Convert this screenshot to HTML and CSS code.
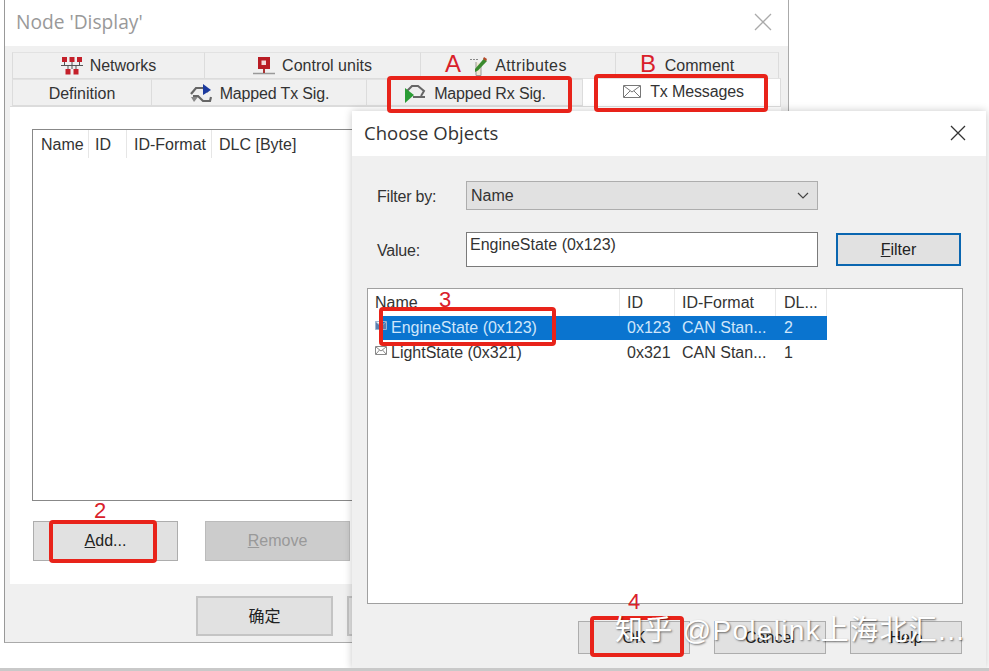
FILE: index.html
```html
<!DOCTYPE html>
<html lang="en">
<head>
<meta charset="utf-8">
<title>Choose Objects</title>
<link rel="stylesheet" href="styles.css">
</head>
<body>
<div class="desktop">
  <section class="win node">
    <header class="node-title">
      <span class="node-title-text">Node 'Display'</span>
      <svg class="close close-dim" viewBox="0 0 18 18"><path d="M1 1L17 17M17 1L1 17"/></svg>
    </header>
    <div class="node-body">
      <div class="tab-row row-one">
        <div class="tab t-net"><svg class="ico" width="22" height="18" viewBox="0 0 22 18"><path d="M0 8.500H22M3.500 3V9M11 3V12M18.500 3V9M7 9V12M15 9V12" fill="none" stroke="#555" stroke-width="1"/><path d="M1 0H6V5H1zM8.500 0H13.500V5H8.500zM16 0H21V5H16zM4.500 12H9.500V17.500H4.500zM12.500 12H17.500V17.500H12.500z" fill="#c4202a"/></svg>Networks</div>
        <div class="tab t-cu"><svg class="ico" width="22" height="19" viewBox="0 0 22 19"><path d="M0 17.500H22" stroke="#999" stroke-width="1.500"/><path d="M11 13V17" stroke="#a33" stroke-width="2"/><path d="M5 1H17V13H5z" fill="#b91c24"/><path d="M8.500 4.500H13V9H8.500z" fill="#f2d9d9"/></svg>Control units</div>
        <div class="tab t-attr"><svg class="ico" width="19" height="20" viewBox="0 0 19 20"><path d="M1 3.500H9" fill="none" stroke="#888" stroke-width="1" stroke-dasharray="2 1"/><path d="M7 6V19.500H12V8" fill="#efe8d2" stroke="#999" stroke-width="1"/><path d="M6 13L15 2.500L18 5L9 14.500L6 16z" fill="#3a8a2e"/><path d="M15 1L18 3L17 5L14 3z" fill="#b5482a"/></svg><span class="wide">Attributes</span></div>
        <div class="tab t-com"><span class="shift">Comment</span></div>
      </div>
      <div class="tab-row row-two">
        <div class="tab t-def">Definition</div>
        <div class="tab t-tx"><svg class="ico" width="22" height="20" viewBox="0 0 22 20"><path d="M1 10L6 4H13L18 8" fill="#eee" stroke="#666" stroke-width="2.200"/><path d="M3 12H8L13 17H20L21 13" fill="#eee" stroke="#666" stroke-width="2.200"/><path d="M13 0L21 6L13 11z" fill="#1c3a9e"/><path d="M1 13L8 13L4 18z" fill="#888"/></svg><span class="tight">Mapped Tx Sig.</span></div>
        <div class="tab t-rx"><svg class="ico" width="22" height="20" viewBox="0 0 22 20"><path d="M3 7L8 2H14L20 7L17 12" fill="#eee" stroke="#666" stroke-width="2"/><path d="M9 13H21" stroke="#666" stroke-width="2"/><path d="M1 4L10 11L1 19z" fill="#2a9c35"/></svg><span class="tight">Mapped Rx Sig.</span></div>
        <div class="tab tab-active t-msg"><svg class="ico" width="18" height="13" viewBox="0 0 18 13"><path d="M.500.500H17.500V12.500H.500zM1 1L9 7L17 1M1 12L7 6M17 12L11 6" fill="#fff" stroke="#777" stroke-width="1"/></svg><span class="tight">Tx Messages</span></div>
      </div>
      <div class="panel">
        <div class="msg-list">
          <div class="msg-head">
            <span class="mh mh-name">Name</span>
            <span class="mh mh-id">ID</span>
            <span class="mh mh-fmt">ID-Format</span>
            <span class="mh mh-dlc">DLC [Byte]</span>
          </div>
        </div>
        <div class="panel-actions">
          <button class="btn btn-add"><u>A</u>dd...</button>
          <button class="btn btn-remove"><u>R</u>emove</button>
        </div>
      </div>
      <div class="node-footer">
        <button class="btn btn-ok-cn">确定</button>
        <button class="btn btn-cancel-cn">取消</button>
      </div>
    </div>
  </section>

  <section class="win choose">
    <header class="choose-title">
      <span>Choose Objects</span>
      <svg class="close" viewBox="0 0 18 18"><path d="M2 2L16 16M16 2L2 16"/></svg>
    </header>
    <div class="choose-body">
      <div class="field field-filter">
        <label class="field-label">Filter by:</label>
        <div class="select"><span>Name</span><svg width="12" height="8" viewBox="0 0 12 8"><path d="M1 1L6 6L11 1" fill="none" stroke="#444" stroke-width="1.200"/></svg></div>
      </div>
      <div class="field field-value">
        <label class="field-label label-value">Value:</label>
        <div class="input">EngineState (0x123)</div>
        <button class="btn btn-filter"><u>F</u>ilter</button>
      </div>
      <div class="obj-list">
        <div class="obj-row obj-head">
          <span class="c-name">Name</span><span class="c-id">ID</span><span class="c-fmt">ID-Format</span><span class="c-dl">DL...</span>
        </div>
        <div class="obj-row obj-sel">
          <svg class="env" width="12" height="9" viewBox="0 0 12 9"><path d="M.500.500H11.500V8.500H.500zM1 1L6 5L11 1" fill="#5b7fae" stroke="#9db4d0"/></svg>
          <span class="c-name">EngineState (0x123)</span><span class="c-id">0x123</span><span class="c-fmt">CAN Stan...</span><span class="c-dl">2</span>
        </div>
        <div class="obj-row">
          <svg class="env" width="12" height="9" viewBox="0 0 12 9"><path d="M.500.500H11.500V8.500H.500zM1 1L6 5L11 1M1 8L4.500 4M11 8L7.500 4" fill="#fff" stroke="#888"/></svg>
          <span class="c-name">LightState (0x321)</span><span class="c-id">0x321</span><span class="c-fmt">CAN Stan...</span><span class="c-dl">1</span>
        </div>
      </div>
      <div class="choose-actions">
        <button class="btn btn-dlg">OK</button>
        <button class="btn btn-dlg">Cancel</button>
        <button class="btn btn-dlg">Help</button>
      </div>
    </div>
  </section>

  <div class="mark mark-a"></div>
  <div class="mark mark-b"></div>
  <div class="mark mark-2"></div>
  <div class="mark mark-3"></div>
  <div class="mark mark-4"></div>
  <span class="note note-a">A</span>
  <span class="note note-b">B</span>
  <span class="note note-2">2</span>
  <span class="note note-3">3</span>
  <span class="note note-4">4</span>
  <div class="watermark">知乎 @Polelink上海北汇...</div>
</div>
</body>
</html>
```

FILE: styles.css
```css
* { box-sizing: border-box; }
html, body { margin: 0; padding: 0; }
body { width: 989px; height: 671px; overflow: hidden; background: #fff; font-family: "Liberation Sans", "Noto Sans CJK SC", sans-serif; color: #222; }
.desktop { position: relative; width: 989px; height: 671px; overflow: hidden; border-bottom: 3px solid #c9c9c9; }
.win { position: absolute; display: flex; flex-direction: column; }
button { font-family: inherit; }

.node { left: 4px; top: 0; width: 785px; height: 643px; border-left: 1px solid #999; border-right: 1px solid #aaa; border-bottom: 1px solid #aaa; background: #fff; }
.node-title { height: 46px; display: flex; align-items: center; justify-content: space-between; padding: 0 16px 3px 11px; }
.node-title-text { font-size: 19.200px; color: #999; font-family: "Open Sans", "Liberation Sans", sans-serif; }
.close { width: 18px; height: 18px; fill: none; stroke: #333; stroke-width: 1.300; }
.close-dim { stroke: #aaa; }
.node-body { flex: 1; display: flex; flex-direction: column; background: #f0f0f0; padding: 6px 7px 0 5px; }

.tab-row { display: flex; height: 27px; margin-left: 2px; font-size: 16px; color: #333; }
.row-one { margin-left: 2px; }
.tab { display: flex; align-items: center; justify-content: center; gap: 7px; background: #f0f0f0; border-top: 1px solid #e2e2e2; border-right: 1px solid #dcdcdc; border-bottom: 1px solid #dcdcdc; white-space: nowrap; }
.row-one .tab:first-child, .row-two .tab:first-child { border-left: 1px solid #dcdcdc; }
.row-two .tab { padding-top: 2px; }
.t-net { width: 193px; }
.t-cu { width: 216px; }
.t-attr { width: 195px; }
.t-com { width: 163px; }
.t-def { width: 140px; }
.t-tx { width: 215px; }
.t-rx { width: 216px; }
.t-msg { width: 198px; }
.wide { letter-spacing: .4px; }
.shift { padding-left: 5px; }
.tight { letter-spacing: -.15px; }
.t-tx { gap: 8px; padding-left: 1px; }
.t-rx { gap: 8px; padding-left: 1px; }
.row-two .tab-active { background: #fff; height: 28px; border-bottom: none; margin-top: -1px; padding: 0 0 2px 4px; gap: 9px; }
.ico { flex: none; }

.panel { height: 478px; background: #fff; padding: 22px 20px 0 22px; display: flex; flex-direction: column; border-top: 1px solid #dcdcdc; }
.msg-list { height: 372px; border: 1px solid #888; background: #fff; }
.msg-head { display: flex; height: 28px; font-size: 16px; color: #333; align-items: center; }
.mh { height: 100%; display: flex; align-items: center; padding: 2px 0 0 8px; border-right: 1px solid #e6e6e6; }
.mh-name { width: 56px; }
.mh-id { width: 38px; padding-left: 6px; }
.mh-fmt { width: 85px; padding-left: 7px; }
.mh-dlc { border-right: none; padding-left: 7px; }
.panel-actions { display: flex; gap: 27px; margin-top: 20px; padding-left: 1px; }
.btn { border: 1px solid #adadad; background: #e1e1e1; color: #222; font-size: 16px; padding: 0; }
.btn-add { width: 145px; height: 40px; }
.btn-remove { width: 145px; height: 40px; flex: none; background: #ccc; color: #999; border-color: #bbb; }
.node-footer { display: flex; gap: 14px; padding: 12px 0 0 186px; }
.btn-ok-cn, .btn-cancel-cn { width: 137px; height: 40px; border: 2px solid #c4c4c4; padding-bottom: 2px; }

.choose { left: 352px; top: 111px; width: 634px; height: 558px; background: #fff; box-shadow: 0 0 8px rgba(0,0,0,.22); }
.choose-title { height: 45px; display: flex; align-items: center; justify-content: space-between; padding: 0 19px 2px 12px; font-size: 18.500px; font-family: "Open Sans", "Liberation Sans", sans-serif; color: #333; }
.choose-body { flex: 1; background: #f0f0f0; padding: 25px 23px 0 15px; display: flex; flex-direction: column; font-size: 16px; color: #333; }
.field { display: flex; align-items: center; }
.field-label { width: 99px; padding: 2px 0 0 10px; letter-spacing: -.2px; }
.select { width: 352px; height: 29px; background: #e1e1e1; border: 1px solid #adadad; display: flex; align-items: center; justify-content: space-between; padding: 0 8px 0 4px; }
.field-value { margin-top: 22px; }
.input { width: 352px; height: 35px; background: #fff; border: 1px solid #7a7a7a; padding: 3px 0 0 3px; }
.btn-filter { width: 125px; height: 33px; margin-left: 18px; flex: none; border: 2px solid #0a66b0; background: #e1e1e1; }
.obj-list { margin-top: 21px; height: 316px; background: #fff; border: 1px solid #a0a0a0; }
.obj-row { position: relative; display: flex; height: 24.500px; align-items: center; margin-right: 135px; white-space: nowrap; }
.obj-head { height: 27px; }
.obj-head span { height: 100%; display: flex; align-items: center; border-right: 1px solid #e8e8e8; }
.c-name { width: 252px; padding-left: 23px; flex: none; }
.obj-head .c-name { padding-left: 7px; }
.c-id { width: 55px; padding-left: 7px; flex: none; }
.c-fmt { width: 101px; padding-left: 7px; flex: none; }
.c-dl { width: 51px; padding-left: 8px; flex: none; }
.env { position: absolute; left: 7px; top: 5px; }
.obj-sel { color: #cfe6fb; }
.obj-sel::before { content: ""; position: absolute; left: 14px; right: 0; top: 0; bottom: 1px; background: #0a74cf; }
.obj-sel > span { position: relative; }
.choose-actions { display: flex; justify-content: flex-end; gap: 24px; margin: 17px 1px 0 0; }
.btn-dlg { width: 112px; height: 33px; }

.mark { position: absolute; border: 4px solid #e8231a; border-radius: 4px; }
.mark-a { left: 387px; top: 76px; width: 185px; height: 37px; }
.mark-b { left: 594px; top: 74px; width: 174px; height: 38px; }
.mark-2 { left: 49px; top: 520px; width: 108px; height: 43px; }
.mark-3 { left: 379px; top: 307px; width: 177px; height: 39px; }
.mark-4 { left: 590px; top: 616px; width: 94px; height: 41px; }
.note { position: absolute; color: #d9202a; line-height: 1; }
.note-a { left: 445px; top: 52px; font-size: 24px; }
.note-b { left: 640px; top: 52px; font-size: 24px; }
.note-2 { left: 94px; top: 500px; font-size: 22px; }
.note-3 { left: 439px; top: 289px; font-size: 22px; }
.note-4 { left: 628px; top: 591px; font-size: 22px; }
.watermark { position: absolute; left: 615px; top: 613px; font-size: 28px; line-height: 36px; letter-spacing: 1.300px; color: #fff; text-shadow: 1px 1px 2px rgba(0,0,0,.55); white-space: nowrap; }
```
